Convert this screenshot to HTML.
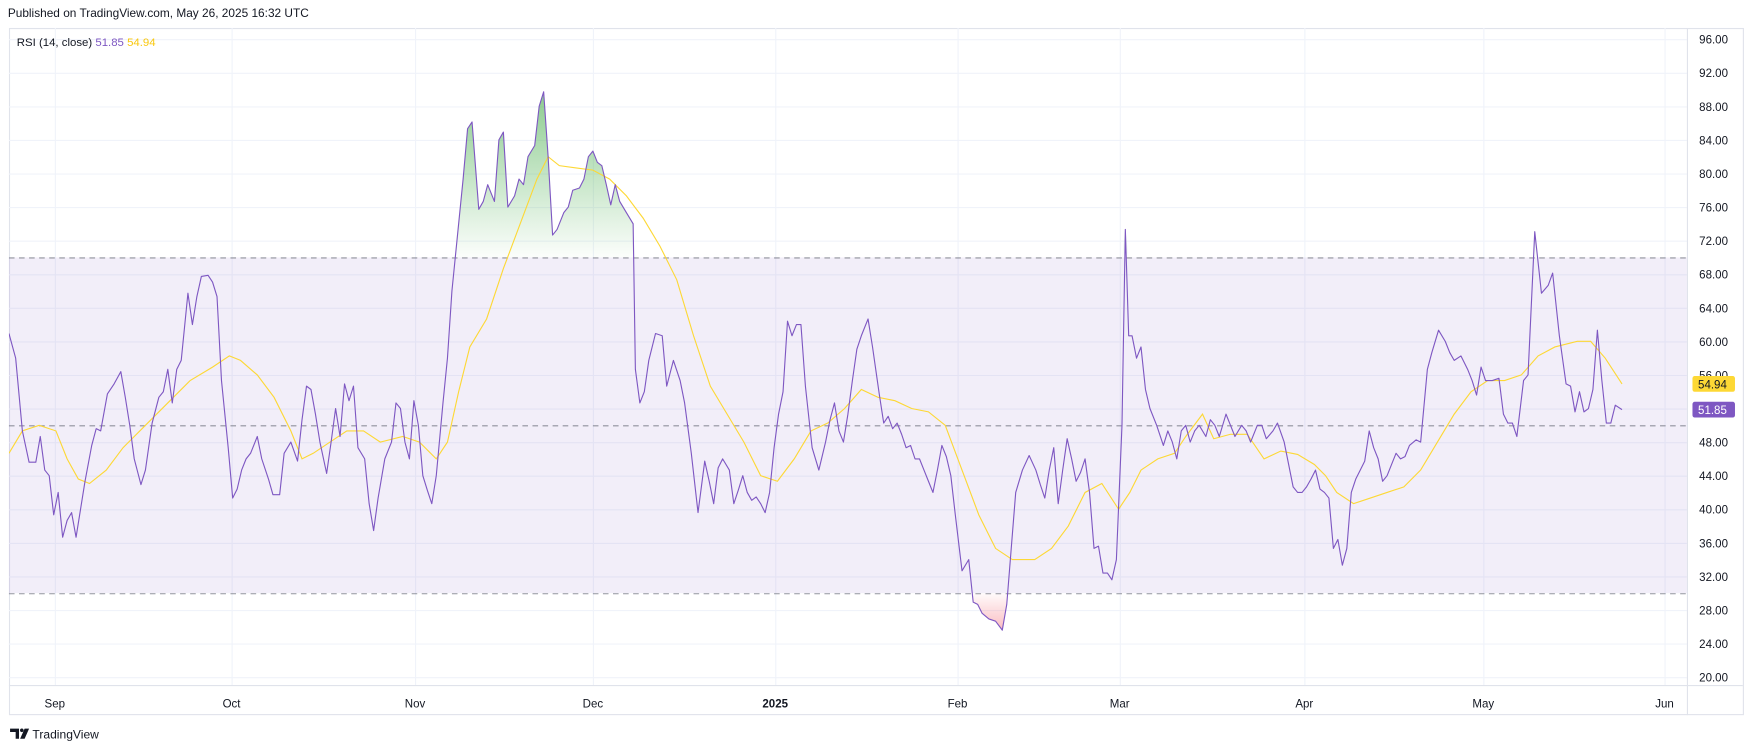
<!DOCTYPE html>
<html><head><meta charset="utf-8"><style>
html,body{margin:0;padding:0;background:#fff;overflow:hidden}
svg{display:block}
text{font-family:"Liberation Sans",sans-serif;}
</style></head><body>
<svg width="1754" height="751" viewBox="0 0 1568 671" preserveAspectRatio="none" xmlns="http://www.w3.org/2000/svg">
<defs>
<linearGradient id="gg" x1="0" y1="80" x2="0" y2="230" gradientUnits="userSpaceOnUse">
<stop offset="0" stop-color="#4caf50" stop-opacity="0.65"/><stop offset="1" stop-color="#4caf50" stop-opacity="0.02"/></linearGradient>
<linearGradient id="rg" x1="0" y1="530" x2="0" y2="570" gradientUnits="userSpaceOnUse">
<stop offset="0" stop-color="#f23645" stop-opacity="0.02"/><stop offset="1" stop-color="#f23645" stop-opacity="0.4"/></linearGradient>
<clipPath id="top"><rect x="0" y="0" width="1508" height="230"/></clipPath>
<clipPath id="bot"><rect x="0" y="530" width="1508" height="100"/></clipPath>
<clipPath id="plot"><rect x="8" y="25" width="1500" height="587"/></clipPath>
</defs>
<text x="7" y="15" font-size="10.6" fill="#131722">Published on TradingView.com, May 26, 2025 16:32 UTC</text>
<rect x="8.5" y="25.5" width="1550" height="613" fill="none" stroke="#e0e3eb"/>
<g stroke="#f0f3fa" stroke-width="1">
<path d="M8 35.5H1508M8 65.5H1508M8 95.5H1508M8 125.5H1508M8 155.5H1508M8 185.5H1508M8 215.5H1508M8 245.5H1508M8 275.5H1508M8 305.5H1508M8 335.5H1508M8 365.5H1508M8 395.5H1508M8 425.5H1508M8 455.5H1508M8 485.5H1508M8 515.5H1508M8 545.5H1508M8 575.5H1508M8 605.5H1508"/>
<path d="M49.5 25V612M207.5 25V612M371.5 25V612M530.5 25V612M693.5 25V612M856.5 25V612M1001.5 25V612M1166.5 25V612M1326.5 25V612M1488.5 25V612"/>
</g>
<rect x="8" y="230" width="1500" height="300" fill="#7e57c2" fill-opacity="0.1"/>
<g stroke="#787b86" stroke-dasharray="5 4" stroke-width="1" opacity="0.8">
<path d="M8 230.5H1508M8 380.5H1508M8 530.5H1508"/>
</g>
<line x1="1508.5" y1="25" x2="1508.5" y2="639" stroke="#e0e3eb"/>
<line x1="8" y1="612.5" x2="1558" y2="612.5" stroke="#e0e3eb"/>
<g id="rsi">
<polygon clip-path="url(#top)" fill="url(#gg)" points="396,230 400,320 404,260 410,200 414,160 418,115 422,109 428,187 432,180 436,165 442,180 446,125 450,118 454,185 460,175 464,160 468,165 472,140 478,130 482,95 486,82 490,140 494,210 498,205 504,190 508,185 512,170 518,168 522,160 526,140 530,135 534,145 538,148 542,165 546,183 550,165 554,180 560,190 566,200 567,230"/>
<polygon clip-path="url(#top)" fill="url(#gg)" points="1003,230 1006,205 1009,230"/>
<polygon clip-path="url(#top)" fill="url(#gg)" points="1370,230 1372,207 1375,230"/>
<polygon clip-path="url(#bot)" fill="url(#rg)" points="850,530 854,460 860,510 866,500 870,538 874,540 878,548 884,553 890,555 896,563 900,540 904,490 908,440 908,530"/>
</g>
<polyline clip-path="url(#plot)" fill="none" stroke="#fdd835" stroke-width="1" points="8,405 20,385 35,380 50,385 60,410 70,428 80,432 95,420 110,400 130,380 150,360 170,340 190,328 205,318 215,322 230,335 245,355 260,385 270,410 280,405 295,395 310,385 325,385 340,395 360,390 375,395 390,410 400,395 410,350 420,310 435,285 450,240 465,200 480,160 490,140 500,148 515,150 530,152 545,160 560,175 575,195 590,220 605,250 620,300 635,345 650,370 665,395 680,425 695,430 710,410 725,385 740,378 755,365 770,348 785,355 800,358 815,365 830,368 845,380 860,420 875,460 890,490 905,500 925,500 940,490 955,470 970,440 985,432 1000,455 1010,440 1020,420 1035,410 1050,405 1060,390 1075,370 1085,392 1100,388 1115,388 1130,410 1145,403 1160,406 1175,415 1185,425 1195,440 1210,450 1225,445 1240,440 1255,435 1270,420 1285,395 1300,370 1315,350 1330,340 1345,340 1360,335 1375,318 1390,310 1410,305 1422,305 1435,320 1450,343"/>
<polyline clip-path="url(#plot)" fill="none" stroke="#7e57c2" stroke-width="1" stroke-linejoin="round" points="8,298 14,320 20,385 26,413 32,413 36,390 40,420 44,425 48,460 52,440 56,480 60,465 64,458 68,480 72,455 76,430 82,398 86,383 90,385 96,352 102,343 108,332 112,355 116,380 120,410 126,433 130,420 136,378 142,355 146,350 150,330 154,360 158,330 162,322 168,262 172,290 176,265 180,247 186,246 190,252 194,265 198,340 204,400 208,445 212,437 216,420 220,410 224,405 230,390 234,410 240,428 244,442 250,442 254,405 260,395 266,412 270,375 274,345 278,348 282,370 286,395 292,423 296,395 300,365 304,390 308,343 312,358 316,345 320,400 326,410 330,450 334,474 338,445 344,410 350,395 354,360 358,365 362,395 366,410 370,358 374,380 378,425 382,438 386,450 390,425 396,360 400,320 404,260 410,200 414,160 418,115 422,109 428,187 432,180 436,165 442,180 446,125 450,118 454,185 460,175 464,160 468,165 472,140 478,130 482,95 486,82 490,140 494,210 498,205 504,190 508,185 512,170 518,168 522,160 526,140 530,135 534,145 538,148 542,165 546,183 550,165 554,180 560,190 566,200 568,330 572,360 576,350 580,322 586,298 592,300 596,345 602,322 608,340 612,360 618,405 624,458 630,412 634,430 638,450 642,418 646,410 652,420 656,450 660,438 664,425 668,440 672,447 676,444 680,450 684,458 688,440 692,400 696,370 700,350 704,287 708,300 712,290 716,290 720,345 726,400 732,420 738,395 742,375 746,360 750,385 754,395 758,370 762,340 766,312 770,300 776,285 780,310 786,352 790,378 794,372 798,383 802,378 806,388 810,400 814,398 818,410 822,410 826,420 830,430 834,440 838,420 842,398 846,408 850,425 854,460 860,510 866,500 870,538 874,540 878,548 884,553 890,555 896,563 900,540 904,490 908,440 914,420 920,407 926,420 930,433 934,445 938,420 942,400 946,450 950,420 954,392 958,410 962,430 966,422 970,410 974,440 978,490 982,488 986,512 990,512 994,518 998,500 1003,380 1006,205 1009,300 1012,300 1016,320 1020,310 1024,348 1028,365 1034,380 1040,398 1044,385 1048,395 1052,410 1056,385 1060,380 1064,395 1068,385 1072,380 1078,390 1082,375 1086,380 1090,390 1096,370 1100,380 1104,390 1110,380 1114,385 1118,395 1124,380 1128,380 1132,392 1138,385 1142,378 1148,395 1152,415 1156,435 1160,440 1164,440 1168,435 1172,428 1176,420 1180,437 1184,440 1188,445 1192,490 1196,482 1200,505 1204,490 1208,440 1212,428 1216,420 1220,412 1224,385 1228,400 1232,410 1236,430 1240,425 1244,415 1248,405 1252,410 1256,408 1260,398 1266,393 1270,395 1276,330 1280,315 1286,295 1292,305 1296,315 1300,322 1306,318 1312,330 1316,340 1320,353 1324,328 1328,340 1334,340 1340,338 1344,370 1348,378 1352,378 1356,390 1362,340 1366,335 1372,207 1378,262 1384,255 1388,244 1394,300 1400,343 1404,345 1408,368 1412,350 1416,368 1420,365 1424,348 1428,295 1432,340 1436,378 1440,378 1444,362 1450,366"/>
<text x="15" y="41" font-size="10.2" fill="#131722">RSI (14, close) <tspan fill="#7e57c2">51.85</tspan> <tspan fill="#f9c80e">54.94</tspan></text>
<g font-size="10.3" fill="#131722">
<text x="1519" y="39">96.00</text><text x="1519" y="69">92.00</text><text x="1519" y="99">88.00</text><text x="1519" y="129">84.00</text><text x="1519" y="159">80.00</text><text x="1519" y="189">76.00</text><text x="1519" y="219">72.00</text><text x="1519" y="249">68.00</text><text x="1519" y="279">64.00</text><text x="1519" y="309">60.00</text><text x="1519" y="339">56.00</text><text x="1519" y="429">44.00</text><text x="1519" y="399">48.00</text><text x="1519" y="459">40.00</text><text x="1519" y="489">36.00</text><text x="1519" y="519">32.00</text><text x="1519" y="549">28.00</text><text x="1519" y="579">24.00</text><text x="1519" y="609">20.00</text>
</g>
<rect x="1513" y="336" width="38" height="14" rx="2" fill="#fdd835"/>
<text x="1518" y="347" font-size="10.3" fill="#131722">54.94</text>
<rect x="1513" y="359" width="38" height="14" rx="2" fill="#7e57c2"/>
<text x="1518" y="370" font-size="10.3" fill="#ffffff">51.85</text>
<g font-size="10.3" fill="#131722" text-anchor="middle">
<text x="49" y="632">Sep</text><text x="207" y="632">Oct</text><text x="371" y="632">Nov</text><text x="530" y="632">Dec</text><text x="693" y="632" font-weight="bold">2025</text><text x="856" y="632">Feb</text><text x="1001" y="632">Mar</text><text x="1166" y="632">Apr</text><text x="1326" y="632">May</text><text x="1488" y="632">Jun</text>
</g>
<g fill="#131722">
<path d="M9 651h8v9h-3v-6h-5z"/><circle cx="19.5" cy="652.5" r="1.6"/><path d="M22 651h4l-4 9h-4z"/>
</g>
<text x="29" y="660" font-size="10.8" fill="#131722">TradingView</text>
</svg>
</body></html>
